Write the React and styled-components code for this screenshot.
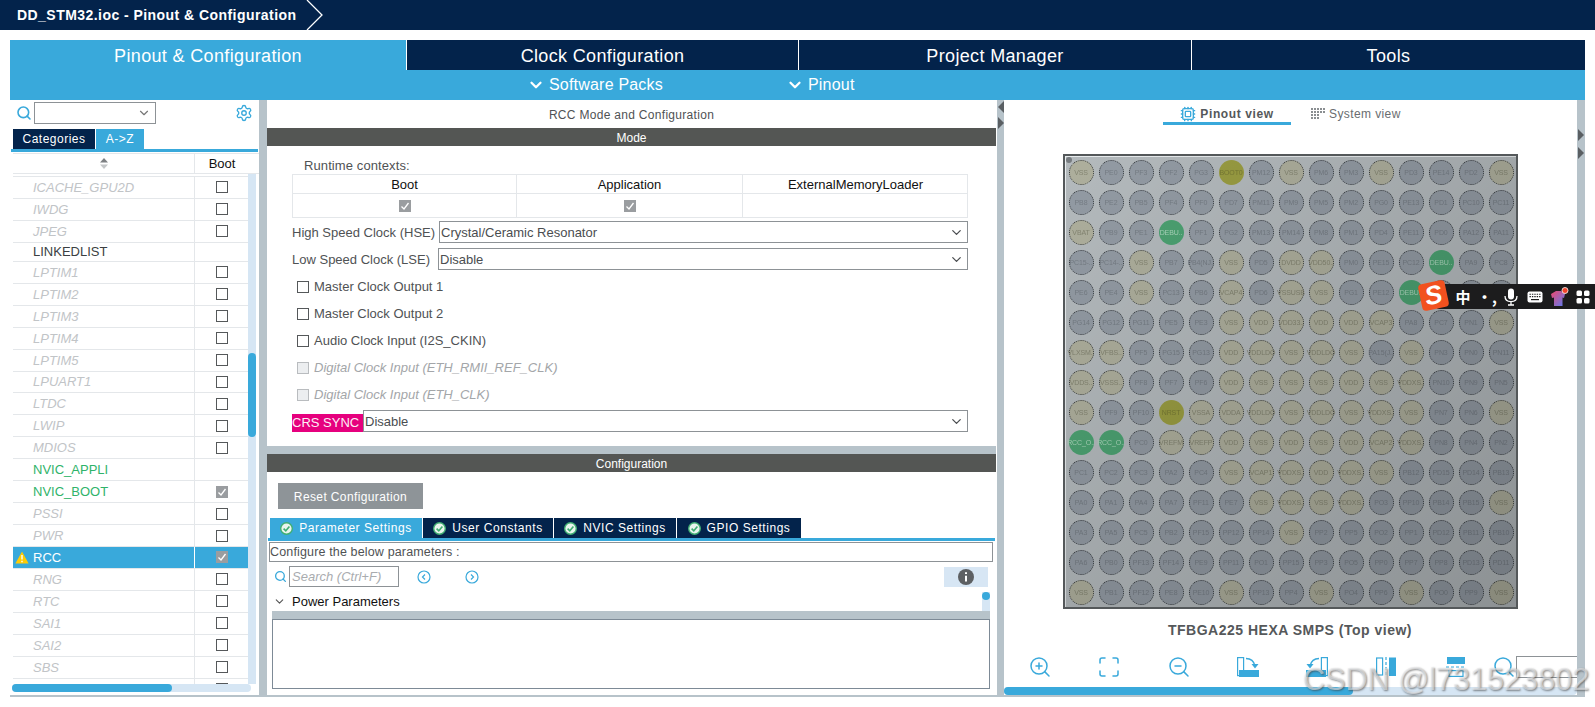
import React from 'react';
import styled, { createGlobalStyle } from 'styled-components';
import { ChevronDown, Search, Settings, Cpu, ZoomIn, ZoomOut, Maximize } from 'lucide-react';

const NAVY = '#03234b';
const BLUE = '#39a9db';
const STRIP = '#b7c3ca';
const HEAD = '#545654';
const LINE = '#e4e7ea';
const FIELD = '#8d9296';

const GlobalStyle = createGlobalStyle`
  html, body { margin: 0; padding: 0; background: #fff; overflow: hidden; }
  body { font-family: "Liberation Sans", Arial, sans-serif; font-size: 13px; color: #4f5254; }
  * { box-sizing: border-box; }
`;

const Page = styled.div`
  position: relative;
  width: 1595px;
  height: 707px;
  overflow: hidden;
`;

const TopBar = styled.div`
  height: 30px;
  background: ${NAVY};
  display: flex;
  align-items: center;
  padding-left: 17px;
  color: #fff;
  font-size: 14px;
  font-weight: 700;
  letter-spacing: 0.45px;
`;

const Crumb = styled.svg`
  margin-left: 9px;
  width: 18px;
  height: 30px;
  flex: none;
`;

const Shell = styled.div`
  width: 1575px;
  margin: 10px 0 0 10px;
`;

const MainTabs = styled.div`
  display: grid;
  grid-template-columns: 396px 392px 393px 394px;
  height: 30px;
  background: ${BLUE};
`;

const MainTab = styled.div`
  display: flex;
  align-items: center;
  justify-content: center;
  padding-top: 2px;
  font-size: 18px;
  letter-spacing: 0.35px;
  color: #fff;
  background: ${p => (p.$active ? BLUE : NAVY)};
  border-left: ${p => (p.$active ? '0' : '1px solid #fff')};
`;

const SubBar = styled.div`
  height: 30px;
  background: ${BLUE};
  display: flex;
  align-items: center;
  padding-left: 517px;
  color: #fff;
  font-size: 16px;
  letter-spacing: 0.2px;
`;

const SubItem = styled.div`
  display: flex;
  align-items: center;
  gap: 4px;
  margin-right: 123px;
`;

const Main = styled.div`
  display: grid;
  grid-template-columns: 249px 8px 730px 7px 573px 8px;
  height: 597px;
  border-bottom: 2px solid ${STRIP};
`;

const Strip = styled.div`
  background: ${STRIP};
  display: flex;
  flex-direction: column;
  align-items: center;
  gap: ${p => p.$gap || 0}px;
  padding-top: ${p => p.$top || 0}px;
`;

const Arrow = styled.div`
  width: 0;
  height: 0;
  border-top: 6px solid transparent;
  border-bottom: 6px solid transparent;
  border-${p => (p.$dir === 'left' ? 'right' : 'left')}: 6px solid #5a5f63;
`;

/* left list */
const ListPanel = styled.div`
  display: flex;
  flex-direction: column;
  height: 595px;
  overflow: hidden;
`;

const ListTools = styled.div`
  height: 29px;
  display: flex;
  align-items: center;
  padding: 0 6px 3px 6px;
  color: ${BLUE};
`;

const ComboBox = styled.div`
  width: 122px;
  height: 22px;
  margin-left: 2px;
  border: 1px solid ${FIELD};
  display: flex;
  align-items: center;
  justify-content: flex-end;
  padding-right: 4px;
  color: #777;
`;

const GearSlot = styled.div`
  margin-left: auto;
  display: flex;
`;

const ListTabs = styled.div`
  display: flex;
  gap: 1px;
  height: 20px;
  margin-left: 3px;
`;

const ListTab = styled.div`
  width: ${p => p.$w}px;
  display: flex;
  align-items: center;
  justify-content: center;
  font-size: 12px;
  letter-spacing: 0.5px;
  color: #fff;
  background: ${p => (p.$active ? BLUE : NAVY)};
`;

const BlueRule = styled.div`
  height: 3px;
  margin: 0 1px;
  background: ${BLUE};
`;

const HeadRow = styled.div`
  display: grid;
  grid-template-columns: 182px 61px;
  height: 21px;
  margin: 1px 0 0 3px;
  border-bottom: 1px solid ${LINE};
  border-top: 1px solid ${LINE};
  color: #111;
`;

const HeadCell = styled.div`
  display: flex;
  align-items: center;
  justify-content: center;
  border-right: ${p => (p.$split ? `1px solid ${LINE}` : 0)};
  padding-right: ${p => (p.$split ? 0 : 7)}px;
`;

const ListBody = styled.div`
  flex: 1;
  min-height: 0;
  display: flex;
  margin-left: 3px;
`;

const Rows = styled.div`
  width: 235px;
  padding-top: 2px;
  overflow: hidden;
`;

const Row = styled.div`
  display: grid;
  grid-template-columns: 182px 53px;
  height: ${p => (p.$short ? 19 : 21.95)}px;
  border-top: 1px solid ${LINE};
  background: ${p => (p.$selected ? BLUE : 'transparent')};
`;

const RowName = styled.div`
  display: flex;
  align-items: center;
  padding-left: 20px;
  position: relative;
  border-right: 1px solid ${p => (p.$selected ? '#fff' : LINE)};
  font-style: ${p => (p.$state === 'off' ? 'italic' : 'normal')};
  color: ${p =>
    p.$selected ? '#fff' : p.$state === 'off' ? '#c1c4c7' : p.$state === 'on' ? '#2fb36a' : '#3b3f42'};
`;

const WarnMark = styled.svg`
  position: absolute;
  left: 2px;
  top: 4px;
`;

const RowCheck = styled.div`
  display: flex;
  align-items: center;
  justify-content: center;
`;

const VTrack = styled.div`
  width: 8px;
  background: #d6e6f4;
`;

const VThumb = styled.div`
  width: 8px;
  height: 84px;
  margin-top: 179px;
  border-radius: 4px;
  background: ${BLUE};
`;

const HTrack = styled.div`
  height: 8px;
  margin: 0 8px 3px 2px;
  border-radius: 4px;
  background: #d6e6f4;
`;

const HThumb = styled.div`
  height: 8px;
  width: ${p => p.$w}px;
  border-radius: 4px;
  background: ${BLUE};
`;

const Box = styled.span`
  display: inline-flex;
  align-items: center;
  justify-content: center;
  width: 12px;
  height: 12px;
  flex: none;
  border: 1px solid ${p => (p.$checked ? '#9a9da0' : p.$disabled ? '#b9bcbf' : '#55585a')};
  background: ${p => (p.$checked ? '#9a9da0' : p.$disabled ? '#eceef0' : '#fff')};
`;

const Check = ({ checked, disabled }) => (
  <Box $checked={checked} $disabled={disabled}>
    {checked && (
      <svg width="10" height="10" viewBox="0 0 10 10">
        <path d="M1.5 5.5 L4 8 L8.5 2" fill="none" stroke="#fff" strokeWidth="1.3" />
      </svg>
    )}
  </Box>
);

/* middle */
const MidPanel = styled.div`
  display: flex;
  flex-direction: column;
  height: 595px;
  padding-right: 1px;
  color: #4f5254;
`;

const PanelTitle = styled.div`
  height: 28px;
  display: flex;
  align-items: center;
  justify-content: center;
  font-size: 12px;
  letter-spacing: 0.3px;
  padding-top: 2px;
`;

const Band = styled.div`
  height: 18px;
  padding-top: 1px;
  background: ${HEAD};
  color: #fff;
  font-size: 12px;
  display: flex;
  align-items: center;
  justify-content: center;
`;

const ModeBody = styled.div`
  height: 300px;
  padding: 11px 28px 0 25px;
`;

const Runtime = styled.div`
  padding: 1px 0 0 12px;
  height: 17px;
  line-height: 15px;
  letter-spacing: 0.1px;
`;

const ContextTable = styled.div`
  display: grid;
  grid-template-columns: 224px 226px 225px;
  grid-template-rows: 19px 23px;
  border: 1px solid ${LINE};
  color: #111;
`;

const ContextCell = styled.div`
  display: flex;
  align-items: center;
  justify-content: center;
  border-right: 1px solid ${LINE};
  border-bottom: ${p => (p.$head ? `1px solid ${LINE}` : 0)};
  &:nth-child(3n) { border-right: 0; }
`;

const FieldRow = styled.div`
  display: flex;
  align-items: center;
  height: 22px;
  margin-top: ${p => p.$gap}px;
`;

const FieldLabel = styled.div`
  width: ${p => p.$w}px;
  flex: none;
  white-space: nowrap;
`;

const SelectBox = styled.div`
  flex: 1;
  height: 22px;
  border: 1px solid ${FIELD};
  display: flex;
  align-items: center;
  justify-content: space-between;
  padding: 0 3px 0 1px;
  color: #4a4d50;
`;

const Tag = styled.div`
  width: 71px;
  height: 18px;
  margin-top: 3px;
  flex: none;
  background: #e6007e;
  color: #fdeef6;
  white-space: nowrap;
  display: flex;
  align-items: center;
`;

const CheckRow = styled.div`
  display: flex;
  align-items: center;
  gap: 5px;
  height: 27px;
  padding-left: 5px;
  font-style: ${p => (p.$disabled ? 'italic' : 'normal')};
  color: ${p => (p.$disabled ? '#a3a6a9' : '#4f5254')};
`;

const CheckList = styled.div`
  margin-top: 3px;
`;

const HBar = styled.div`
  height: 8px;
  background: ${STRIP};
`;

const ConfigBody = styled.div`
  flex: 1;
  display: flex;
  flex-direction: column;
  min-height: 0;
`;

const ResetButton = styled.div`
  width: 145px;
  height: 26px;
  margin: 11px 0 0 11px;
  padding-top: 1px;
  background: #8e9498;
  color: #fff;
  font-size: 12px;
  letter-spacing: 0.38px;
  display: flex;
  align-items: center;
  justify-content: center;
`;

const ConfigTabs = styled.div`
  display: flex;
  gap: 1px;
  height: 20px;
  margin: 9px 0 0 3px;
`;

const ConfigTab = styled.div`
  width: ${p => p.$w}px;
  display: flex;
  align-items: center;
  justify-content: center;
  gap: 6px;
  color: #fff;
  font-size: 12px;
  letter-spacing: 0.55px;
  background: ${p => (p.$active ? BLUE : NAVY)};
`;

const ConfigRule = styled.div`
  height: 3px;
  margin: 0 1px;
  background: ${BLUE};
`;

const HintBox = styled.div`
  height: 20px;
  margin: 1px 3px 0 2px;
  border: 1px solid ${FIELD};
  display: flex;
  align-items: center;
  letter-spacing: 0.15px;
  font-size: 12.5px;
`;

const SearchRow = styled.div`
  display: flex;
  align-items: center;
  height: 21px;
  margin: 4px 8px 0 7px;
  color: ${BLUE};
`;

const SearchInput = styled.div`
  width: 110px;
  height: 21px;
  margin-left: 2px;
  border: 1px solid ${FIELD};
  display: flex;
  align-items: center;
  padding-left: 2px;
  font-style: italic;
  color: #a9acaf;
`;

const NavButton = styled.svg`
  margin-left: ${p => p.$gap}px;
`;

const InfoButton = styled.div`
  width: 44px;
  height: 20px;
  margin-left: auto;
  background: #d7e6f4;
  display: flex;
  align-items: center;
  justify-content: center;
`;

const PowerRow = styled.div`
  display: flex;
  align-items: center;
  height: 19px;
  margin: 5px 6px 0 6px;
  color: #111;
  gap: 6px;
`;

const StubScroll = styled.div`
  width: 8px;
  height: 19px;
  margin-left: auto;
  background: #d6e6f4;
  &::before {
    content: '';
    display: block;
    width: 8px;
    height: 8px;
    border-radius: 50%;
    background: ${BLUE};
  }
`;

const GreyHead = styled.div`
  height: 8px;
  margin: 0 6px 0 5px;
  background: ${STRIP};
`;

const EmptyBox = styled.div`
  height: 70px;
  margin: 0 6px 0 5px;
  border: 1px solid #7d8a96;
`;

/* right */
const RightPanel = styled.div`
  display: flex;
  flex-direction: column;
  height: 595px;
  overflow: hidden;
`;

const ViewTabs = styled.div`
  display: flex;
  height: 25px;
  padding-left: 159px;
`;

const ViewTab = styled.div`
  width: ${p => p.$w}px;
  display: flex;
  align-items: center;
  justify-content: ${p => (p.$active ? 'center' : 'flex-start')};
  gap: 4px;
  padding: 6px 0 0 ${p => (p.$active ? 0 : 20)}px;
  font-size: 12px;
  letter-spacing: ${p => (p.$active ? 0.6 : 0.4)}px;
  font-weight: ${p => (p.$active ? 700 : 400)};
  color: ${p => (p.$active ? '#55585a' : '#6a6d70')};
  border-bottom: 3px solid ${p => (p.$active ? BLUE : 'transparent')};
`;

const Chip = styled.div`
  position: relative;
  width: 455px;
  height: 455px;
  margin: 29px 0 0 59px;
  border: 2px solid #54585a;
  background: #b4babd;
  box-shadow: inset 1px 1px 0 #e8ecee;
  &::after {
    content: '';
    position: absolute;
    inset: 0;
    pointer-events: none;
    background: linear-gradient(135deg, rgba(0, 0, 0, 0) 0%, rgba(0, 0, 0, 0.22) 100%);
  }
`;

const CornerDot = styled.div`
  position: absolute;
  left: 1px;
  top: 1px;
  width: 6px;
  height: 6px;
  border-radius: 50%;
  background: #767b7f;
`;

const PinGrid = styled.div`
  display: grid;
  grid-template-columns: repeat(15, 30px);
  grid-auto-rows: 30px;
  padding: 1px 0 0 1px;
  filter: blur(0.35px);
`;

const PIN_COLORS = {
  io: ['#939ba4', '#767d85'],
  power: ['#aeaf9d', '#848572'],
  boot: ['#9a9d42', '#787a34'],
  debug: ['#4ca272', '#a9d6bb'],
};

const Pin = styled.div`
  width: 25px;
  height: 25px;
  margin: 2.5px;
  border-radius: 50%;
  border: ${p => (p.$kind === 'debug' || p.$kind === 'boot' ? '0' : '1px dotted #34383b')};
  background: ${p => PIN_COLORS[p.$kind][0]};
  color: ${p => PIN_COLORS[p.$kind][1]};
  font-size: 7px;
  letter-spacing: -0.1px;
  display: flex;
  align-items: center;
  justify-content: center;
  white-space: nowrap;
`;

const ChipTitle = styled.div`
  height: 22px;
  margin-top: 10px;
  text-align: center;
  font-weight: 700;
  font-size: 14px;
  line-height: 22px;
  letter-spacing: 0.5px;
  padding-right: 1px;
  color: #55585a;
`;

const Toolbar = styled.div`
  display: flex;
  align-items: center;
  gap: 45.3px;
  height: 22px;
  margin-top: 15px;
  padding-left: 24px;
  color: ${BLUE};
`;

const ToolSlot = styled.div`
  width: 24px;
  height: 24px;
  flex: none;
  display: flex;
  align-items: center;
  justify-content: center;
  margin-left: ${p => p.$pull || 0}px;
`;

const ZoomField = styled.div`
  width: 62px;
  height: 22px;
  margin-left: -45.3px;
  flex: none;
  background: #fff;
  border: 1px solid ${FIELD};
`;

const BottomScroll = styled.div`
  height: 8px;
  margin-top: 9px;
  border-radius: 4px;
  background: #d6e6f4;
`;

/* overlays */
const Watermark = styled.div`
  position: absolute;
  left: 1303px;
  top: 662px;
  font-size: 30.6px;
  line-height: 34px;
  white-space: nowrap;
  color: rgba(232, 233, 235, 0.6);
  text-shadow: 1px 1px 2px rgba(60, 60, 60, 0.6);
`;

const ImeBar = styled.div`
  position: absolute;
  left: 1436px;
  top: 284px;
  width: 159px;
  height: 25px;
  background: #1c1c1d;
  border-radius: 3px 0 0 3px;
  display: flex;
  align-items: center;
  padding-left: 15px;
  color: #fff;
`;

const ImeSlot = styled.div`
  width: 24px;
  flex: none;
  display: flex;
  align-items: center;
  justify-content: center;
  font-size: 15px;
  font-family: "Noto Sans CJK SC", "Liberation Sans", sans-serif;
  font-weight: 700;
`;

const ImeLogo = styled.div`
  position: absolute;
  left: 1420px;
  top: 282px;
  width: 27px;
  height: 27px;
  border-radius: 4px;
  background: #f2511f;
  color: #fff;
  transform: rotate(-12deg);
  display: flex;
  align-items: center;
  justify-content: center;
  font-size: 26px;
  font-weight: 700;
  font-style: italic;
`;

const PINS = [
  'VSS PE0 PF3 PF2 PG3 BOOT0 PM12 VSS PM6 PM3 VSS PD3 PE14 PD2 VSS',
  'PB8 PE2 PB5 PF4 PF0 PD7 PM11 PM9 PM5 PM2 PG0 PE13 PD1 PC10 PC11',
  'VBAT PB9 PE1 DEBU.. PF1 PG2 PM13 PM14 PM8 PM1 PD4 PE11 PD0 PA12 PA11',
  'PC15-.. PC14-.. VSS PB7 PB4(NJ.. VSS PD5 DVDD VDD50.. PM0 PE15 PC12 DEBU.. PA9 PC8',
  'PE6 PE4 VSS PC13 PB6 VCAP4 PD6 VSSUSB VSS PG1 PE12 DEBU.. PA10 PC9 PC6',
  'PG14 PG12 PG11 PE5 PE3 VSS VDD VDD33.. VDD VDD VCAP3 PA8 PC7 PN1 VSS',
  'VLXSM.. VFBS.. PF5 PG15 PG13 VDD VDDLDO VSS VDDLDO VSS PA15(J.. VSS PN3 PN0 PN11',
  'VDDS.. VSSS.. PF8 PF7 PF6 VDD VSS VSS VSS VDD VSS VDDXS.. PN10 PN9 PN5',
  'VSS PF9 PF10 NRST VSSA VDDA VDDLDO VSS VDDLDO VSS VDDXS.. VSS PN7 PN6 VSS',
  'RCC_O.. RCC_O.. PC0 VREFM VREFP VDD VSS VDD VSS VDD VCAP2 VDDXS.. PN8 PN4 PN2',
  'PC1 PC2 PC3 PA2 PC4 VSS VCAP1 VDDXS.. VDD VDDXS.. VSS PB12 PD15 PD14 PB13',
  'PA0 PA1 PA4 PA7 PF11 PE7 VSS VDDXS.. VSS VDDXS.. PO3 PP10 PB14 PB15 VSS',
  'PA3 PA5 PC5 PB2 PF15 PP12 PP14 VSS PP2 PP5 PO2 PP1 PD12 PB11 PB10',
  'PA6 PB0 PF13 PF14 PE9 PP11 PO1 PP15 PP3 PO5 PP0 PP7 PP8 PD13 PD11',
  'VSS PB1 PF12 PE8 PE10 VSS PP13 PP4 VSS PO4 PP6 VSS PO0 PP9 VSS',
].flatMap(r => r.split(' '));

const pinKind = name => {
  if (name === 'BOOT0' || name === 'NRST') return 'boot';
  if (name.startsWith('DEBU') || name.startsWith('RCC')) return 'debug';
  if (name[0] === 'V' || name === 'DVDD') return 'power';
  return 'io';
};

const LIST = [
  ['ICACHE_GPU2D', 'off'],
  ['IWDG', 'off'],
  ['JPEG', 'off'],
  ['LINKEDLIST', 'plain', 'none'],
  ['LPTIM1', 'off'],
  ['LPTIM2', 'off'],
  ['LPTIM3', 'off'],
  ['LPTIM4', 'off'],
  ['LPTIM5', 'off'],
  ['LPUART1', 'off'],
  ['LTDC', 'off'],
  ['LWIP', 'off'],
  ['MDIOS', 'off'],
  ['NVIC_APPLI', 'on', 'none'],
  ['NVIC_BOOT', 'on', 'checked'],
  ['PSSI', 'off'],
  ['PWR', 'off'],
  ['RCC', 'plain', 'checked', true],
  ['RNG', 'off'],
  ['RTC', 'off'],
  ['SAI1', 'off'],
  ['SAI2', 'off'],
  ['SBS', 'off'],
  ['', 'off'],
];

const PARAM_TABS = [
  ['Parameter Settings', 152, true],
  ['User Constants', 130],
  ['NVIC Settings', 122],
  ['GPIO Settings', 124],
];

const OkMark = () => (
  <svg width="13" height="13" viewBox="0 0 13 13">
    <circle cx="6.5" cy="6.5" r="5.8" fill="#e9f5ee" stroke="#3fae72" strokeWidth="1.4" />
    <path d="M3.6 6.6 L5.8 8.8 L9.4 4.6" fill="none" stroke="#3fae72" strokeWidth="1.6" />
  </svg>
);

const Nav = ({ gap, back }) => (
  <NavButton $gap={gap} width="14" height="14" viewBox="0 0 14 14">
    <circle cx="7" cy="7" r="6" fill="none" stroke={BLUE} strokeWidth="1.2" />
    <path d={back ? 'M8 4.5 L5.5 7 L8 9.5' : 'M6 4.5 L8.5 7 L6 9.5'} fill="none" stroke={BLUE} strokeWidth="1.2" />
  </NavButton>
);

const RotateRight = () => (
  <svg width="22" height="20" viewBox="0 0 22 20" fill="none" stroke={BLUE}>
    <rect x="0.6" y="0.6" width="6" height="18" strokeWidth="1.2" />
    <rect x="2" y="13" width="20" height="7" fill={BLUE} stroke="none" />
    <path d="M9 1.5 C14 1.5 17 4.5 18 9" strokeWidth="1.4" />
    <path d="M14.5 7 L18 11.5 L21.5 7" fill={BLUE} stroke="none" />
  </svg>
);

const RotateLeft = () => (
  <svg width="22" height="20" viewBox="0 0 22 20" fill="none" stroke={BLUE}>
    <rect x="15.4" y="0.6" width="6" height="18" strokeWidth="1.2" />
    <rect x="0" y="13" width="20" height="7" fill={BLUE} stroke="none" />
    <path d="M13 1.5 C8 1.5 5 4.5 4 9" strokeWidth="1.4" />
    <path d="M0.5 7 L4 11.5 L7.5 7" fill={BLUE} stroke="none" />
  </svg>
);

const FlipSide = () => (
  <svg width="20" height="20" viewBox="0 0 20 20" fill="none" stroke={BLUE}>
    <rect x="0.6" y="1" width="6" height="17" strokeWidth="1.2" />
    <path d="M10 0 V20" strokeWidth="1.2" strokeDasharray="3 2" />
    <rect x="13" y="0.5" width="7" height="18.5" fill={BLUE} stroke="none" />
  </svg>
);

const FlipUp = () => (
  <svg width="20" height="20" viewBox="0 0 20 20" fill="none" stroke={BLUE}>
    <rect x="1" y="0" width="18" height="7" fill={BLUE} stroke="none" />
    <path d="M0 10 H20" strokeWidth="1.2" strokeDasharray="3 2" />
    <rect x="3" y="13.6" width="14" height="5.8" strokeWidth="1.2" />
  </svg>
);

const SystemIcon = () => (
  <svg width="14" height="12" viewBox="0 0 14 12" fill="#8a8e91">
    {[0, 3, 6, 9].map(y =>
      [0, 3, 6, 9, 12].map(x =>
        y > 3 && x > 6 ? null : <rect key={`${x}-${y}`} x={x} y={y} width="2" height="2" />
      )
    )}
  </svg>
);

const MicIcon = () => (
  <svg width="16" height="18" viewBox="0 0 16 18">
    <rect x="5" y="0.5" width="6" height="11" rx="3" fill="#fff" />
    <path d="M2 8 C2 11.8 4.8 13.6 8 13.6 C11.2 13.6 14 11.8 14 8 M8 13.6 V17 M5 17 H11" fill="none" stroke="#fff" strokeWidth="1.3" />
  </svg>
);

const KeysIcon = () => (
  <svg width="16" height="12" viewBox="0 0 16 12">
    <rect x="0.5" y="0.5" width="15" height="11" rx="2" fill="#fff" />
    <path d="M2.5 3.2 H13.5 M2.5 5.6 H13.5" stroke="#1c1c1d" strokeWidth="1.1" strokeDasharray="1.4 1" />
    <path d="M4 8.6 H12" stroke="#1c1c1d" strokeWidth="1.2" />
  </svg>
);

const ShirtIcon = () => (
  <svg width="19" height="20" viewBox="0 0 19 20">
    <defs>
      <linearGradient id="shirt" x1="0" y1="0" x2="1" y2="1">
        <stop offset="0" stopColor="#f0486e" />
        <stop offset="1" stopColor="#5a7bf2" />
      </linearGradient>
    </defs>
    <path d="M1 7 L6 4 H11 L15 7 L14 11 L12.5 10.5 V19 H4 V10.5 L2 11 Z" fill="url(#shirt)" />
    <circle cx="15" cy="3.5" r="3" fill="#f2452c" stroke="#fff" strokeWidth="0.8" />
  </svg>
);

const TilesIcon = () => (
  <svg width="14" height="14" viewBox="0 0 14 14" fill="#fff">
    <rect x="0.5" y="0.5" width="5.5" height="5.5" rx="1.5" />
    <rect x="8" y="0.5" width="5.5" height="5.5" rx="1.5" />
    <rect x="0.5" y="8" width="5.5" height="5.5" rx="1.5" />
    <rect x="8" y="8" width="5.5" height="5.5" rx="1.5" />
  </svg>
);

const App = () => (
  <Page>
    <GlobalStyle />
    <TopBar>
      DD_STM32.ioc - Pinout &amp; Configuration
      <Crumb viewBox="0 0 18 30">
        <path d="M1 0 L16 15 L1 30" fill="none" stroke="#fff" strokeWidth="1.3" />
      </Crumb>
    </TopBar>

    <Shell>
      <MainTabs>
        <MainTab $active>Pinout &amp; Configuration</MainTab>
        <MainTab>Clock Configuration</MainTab>
        <MainTab>Project Manager</MainTab>
        <MainTab>Tools</MainTab>
      </MainTabs>
      <SubBar>
        <SubItem>
          <ChevronDown size={18} strokeWidth={3} />
          Software Packs
        </SubItem>
        <SubItem>
          <ChevronDown size={18} strokeWidth={3} />
          Pinout
        </SubItem>
      </SubBar>

      <Main>
        <ListPanel>
          <ListTools>
            <Search size={16} strokeWidth={2.4} />
            <ComboBox>
              <ChevronDown size={14} />
            </ComboBox>
            <GearSlot>
              <Settings size={18} strokeWidth={1.8} />
            </GearSlot>
          </ListTools>
          <ListTabs>
            <ListTab $w={82}>Categories</ListTab>
            <ListTab $w={48} $active>A-&gt;Z</ListTab>
          </ListTabs>
          <BlueRule />
          <HeadRow>
            <HeadCell $split>
              <svg width="10" height="11" viewBox="0 0 10 11">
                <path d="M5 0 L9 4.5 H1 Z" fill="#7d8083" />
                <path d="M5 11 L9 6.5 H1 Z" fill="#c3c6c8" />
              </svg>
            </HeadCell>
            <HeadCell>Boot</HeadCell>
          </HeadRow>
          <ListBody>
            <Rows>
              {LIST.map(([name, state, box, selected]) => (
                <Row key={name || 'tail'} $selected={selected} $short={name === 'LINKEDLIST'}>
                  <RowName $state={state} $selected={selected}>
                    {selected && (
                      <WarnMark width="14" height="13" viewBox="0 0 14 13">
                        <path d="M7 0.5 L13.6 12.5 H0.4 Z" fill="#ffcb05" />
                        <path d="M7 4 V8.6 M7 9.8 V11.2" stroke="#fff" strokeWidth="1.4" />
                      </WarnMark>
                    )}
                    {name}
                  </RowName>
                  <RowCheck>{box !== 'none' && <Check checked={box === 'checked'} />}</RowCheck>
                </Row>
              ))}
            </Rows>
            <VTrack>
              <VThumb />
            </VTrack>
          </ListBody>
          <HTrack>
            <HThumb $w={160} />
          </HTrack>
        </ListPanel>

        <Strip />

        <MidPanel>
          <PanelTitle>RCC Mode and Configuration</PanelTitle>
          <Band>Mode</Band>
          <ModeBody>
            <Runtime>Runtime contexts:</Runtime>
            <ContextTable>
              <ContextCell $head>Boot</ContextCell>
              <ContextCell $head>Application</ContextCell>
              <ContextCell $head>ExternalMemoryLoader</ContextCell>
              <ContextCell><Check checked /></ContextCell>
              <ContextCell><Check checked /></ContextCell>
              <ContextCell />
            </ContextTable>
            <FieldRow $gap={3}>
              <FieldLabel $w={147}>High Speed Clock (HSE)</FieldLabel>
              <SelectBox>
                Crystal/Ceramic Resonator
                <ChevronDown size={15} />
              </SelectBox>
            </FieldRow>
            <FieldRow $gap={5}>
              <FieldLabel $w={146}>Low Speed Clock (LSE)</FieldLabel>
              <SelectBox>
                Disable
                <ChevronDown size={15} />
              </SelectBox>
            </FieldRow>
            <CheckList>
              <CheckRow><Check />Master Clock Output 1</CheckRow>
              <CheckRow><Check />Master Clock Output 2</CheckRow>
              <CheckRow><Check />Audio Clock Input (I2S_CKIN)</CheckRow>
              <CheckRow $disabled><Check disabled />Digital Clock Input (ETH_RMII_REF_CLK)</CheckRow>
              <CheckRow $disabled><Check disabled />Digital Clock Input (ETH_CLK)</CheckRow>
            </CheckList>
            <FieldRow $gap={2}>
              <Tag>CRS SYNC</Tag>
              <SelectBox>
                Disable
                <ChevronDown size={15} />
              </SelectBox>
            </FieldRow>
          </ModeBody>
          <HBar />
          <Band>Configuration</Band>
          <ConfigBody>
            <ResetButton>Reset Configuration</ResetButton>
            <ConfigTabs>
              {PARAM_TABS.map(([label, w, active]) => (
                <ConfigTab key={label} $w={w} $active={active}>
                  <OkMark />
                  {label}
                </ConfigTab>
              ))}
            </ConfigTabs>
            <ConfigRule />
            <HintBox>Configure the below parameters :</HintBox>
            <SearchRow>
              <Search size={13} strokeWidth={2.4} />
              <SearchInput>Search (Ctrl+F)</SearchInput>
              <Nav gap={18} back />
              <Nav gap={34} />
              <InfoButton>
                <svg width="16" height="16" viewBox="0 0 16 16">
                  <circle cx="8" cy="8" r="8" fill="#5d6063" />
                  <path d="M8 3.2 V5 M8 6.8 V12.6" stroke="#fff" strokeWidth="2" />
                </svg>
              </InfoButton>
            </SearchRow>
            <PowerRow>
              <ChevronDown size={13} color="#555" />
              Power Parameters
              <StubScroll />
            </PowerRow>
            <GreyHead />
            <EmptyBox />
          </ConfigBody>
        </MidPanel>

        <Strip $top={1} $gap={4}>
          <Arrow $dir="left" />
          <Arrow $dir="right" />
        </Strip>

        <RightPanel>
          <ViewTabs>
            <ViewTab $w={128} $active>
              <Cpu size={16} color={BLUE} />
              Pinout view
            </ViewTab>
            <ViewTab $w={130}>
              <SystemIcon />
              System view
            </ViewTab>
          </ViewTabs>
          <Chip>
            <CornerDot />
            <PinGrid>
              {PINS.map((name, i) => (
                <Pin key={i} $kind={pinKind(name)}>{name}</Pin>
              ))}
            </PinGrid>
          </Chip>
          <ChipTitle>TFBGA225 HEXA SMPS (Top view)</ChipTitle>
          <Toolbar>
            <ToolSlot><ZoomIn size={24} strokeWidth={1.5} /></ToolSlot>
            <ToolSlot><Maximize size={24} strokeWidth={1.5} /></ToolSlot>
            <ToolSlot><ZoomOut size={24} strokeWidth={1.5} /></ToolSlot>
            <ToolSlot><RotateRight /></ToolSlot>
            <ToolSlot><RotateLeft /></ToolSlot>
            <ToolSlot><FlipSide /></ToolSlot>
            <ToolSlot><FlipUp /></ToolSlot>
            <ToolSlot $pull={-21.3}><Search size={24} strokeWidth={1.5} /></ToolSlot>
            <ZoomField />
          </Toolbar>
          <BottomScroll>
            <HThumb $w={349} />
          </BottomScroll>
        </RightPanel>

        <Strip $top={29} $gap={6}>
          <Arrow $dir="right" />
          <Arrow $dir="right" />
        </Strip>
      </Main>
    </Shell>

    <ImeBar>
      <ImeSlot>中</ImeSlot>
      <ImeSlot>•,</ImeSlot>
      <ImeSlot><MicIcon /></ImeSlot>
      <ImeSlot><KeysIcon /></ImeSlot>
      <ImeSlot><ShirtIcon /></ImeSlot>
      <ImeSlot><TilesIcon /></ImeSlot>
    </ImeBar>
    <ImeLogo>S</ImeLogo>
    <Watermark>CSDN @l731523802</Watermark>
  </Page>
);

export default App;
